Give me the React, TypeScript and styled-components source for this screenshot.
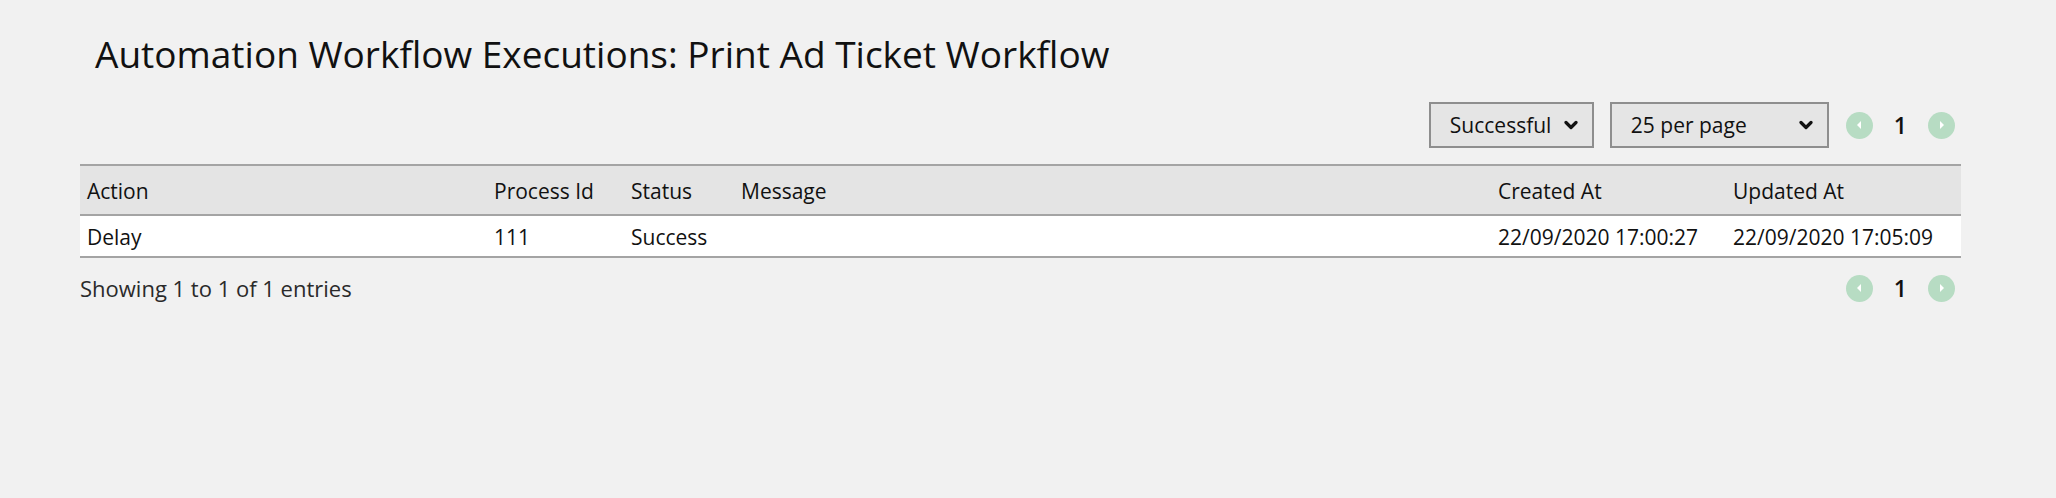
import React from 'react';
import styled, { createGlobalStyle } from 'styled-components';

const GlobalStyle = createGlobalStyle`
  html, body {
    margin: 0;
    padding: 0;
    background: #f1f1f1;
  }
  body {
    font-family: 'Open Sans', 'Noto Sans', sans-serif;
    color: #111;
  }
`;

const Page = styled.div`
  min-height: 498px;
  box-sizing: border-box;
  padding: 0 95px 0 80px;
  background: #f1f1f1;
`;

const Title = styled.h1`
  margin: 0;
  padding: 29px 0 0 15px;
  font-size: 37px;
  line-height: 50px;
  font-weight: 400;
  color: #111;
`;

const Toolbar = styled.div`
  display: flex;
  justify-content: flex-end;
  align-items: center;
  gap: 16px;
  margin-top: 23px;
  padding-right: 6px;
`;

const SelectBox = styled.div<{ $width: number }>`
  width: ${({ $width }) => $width}px;
  height: 46px;
  box-sizing: border-box;
  border: 2px solid #8e8e8e;
  background: #e5e5e5;
  display: flex;
  align-items: center;
  padding: 0 14px 0 19px;
  font-size: 21px;
  color: #111;
`;

const SelectLabel = styled.span`
  flex: 1;
`;

const Pager = styled.div`
  display: flex;
  align-items: center;
  gap: 21px;
  margin-left: 1px;
`;

const PageButton = styled.span`
  width: 27px;
  height: 27px;
  border-radius: 50%;
  background: #b7dcc3;
  display: flex;
  align-items: center;
  justify-content: center;
`;

const PageNumber = styled.span`
  font-size: 23px;
  font-weight: 600;
  color: #111;
`;

const Table = styled.table`
  width: 100%;
  margin-top: 16px;
  border-collapse: collapse;
  table-layout: fixed;
  font-size: 21px;
`;

const HeadRow = styled.tr`
  background: #e4e4e4;
  border-top: 2px solid #a4a4a4;
  border-bottom: 2px solid #a4a4a4;
`;

const BodyRow = styled.tr`
  background: #fff;
  border-bottom: 2px solid #a4a4a4;
`;

const Th = styled.th`
  height: 46px;
  padding: 2px 7px 0;
  text-align: left;
  font-weight: 400;
  white-space: nowrap;
`;

const Td = styled.td`
  height: 38px;
  padding: 2px 7px 0;
  white-space: nowrap;
`;

const Footer = styled.div`
  display: flex;
  justify-content: space-between;
  align-items: center;
  margin-top: 14px;
  padding-right: 6px;
`;

const Summary = styled.span`
  font-size: 22px;
  color: #2a2a2a;
`;

const Chevron = () => (
  <svg width="14" height="10" viewBox="0 0 14 10">
    <path d="M2 2.5 L7 7.5 L12 2.5" fill="none" stroke="#111" strokeWidth="3.2" strokeLinecap="round" strokeLinejoin="round" />
  </svg>
);

const Arrow = ({ dir }: { dir: 'left' | 'right' }) => (
  <svg width="8" height="12" viewBox="0 0 8 12">
    {dir === 'left' ? <path d="M6 2 L2 6 L6 10 Z" fill="#fff" /> : <path d="M2 2 L6 6 L2 10 Z" fill="#fff" />}
  </svg>
);

const Pagination = () => (
  <Pager>
    <PageButton>
      <Arrow dir="left" />
    </PageButton>
    <PageNumber>1</PageNumber>
    <PageButton>
      <Arrow dir="right" />
    </PageButton>
  </Pager>
);

const columns = [
  { label: 'Action', width: 407 },
  { label: 'Process Id', width: 137 },
  { label: 'Status', width: 110 },
  { label: 'Message', width: 757 },
  { label: 'Created At', width: 235 },
  { label: 'Updated At', width: 235 },
];

const rows = [['Delay', '111', 'Success', '', '22/09/2020 17:00:27', '22/09/2020 17:05:09']];

export default function App() {
  return (
    <>
      <GlobalStyle />
      <Page>
        <Title>Automation Workflow Executions: Print Ad Ticket Workflow</Title>
        <Toolbar>
          <SelectBox $width={165}>
            <SelectLabel>Successful</SelectLabel>
            <Chevron />
          </SelectBox>
          <SelectBox $width={219}>
            <SelectLabel>25 per page</SelectLabel>
            <Chevron />
          </SelectBox>
          <Pagination />
        </Toolbar>
        <Table>
          <colgroup>
            {columns.map((c) => (
              <col key={c.label} style={{ width: c.width }} />
            ))}
          </colgroup>
          <thead>
            <HeadRow>
              {columns.map((c) => (
                <Th key={c.label}>{c.label}</Th>
              ))}
            </HeadRow>
          </thead>
          <tbody>
            {rows.map((r, i) => (
              <BodyRow key={i}>
                {r.map((cell, j) => (
                  <Td key={j}>{cell}</Td>
                ))}
              </BodyRow>
            ))}
          </tbody>
        </Table>
        <Footer>
          <Summary>Showing 1 to 1 of 1 entries</Summary>
          <Pagination />
        </Footer>
      </Page>
    </>
  );
}
